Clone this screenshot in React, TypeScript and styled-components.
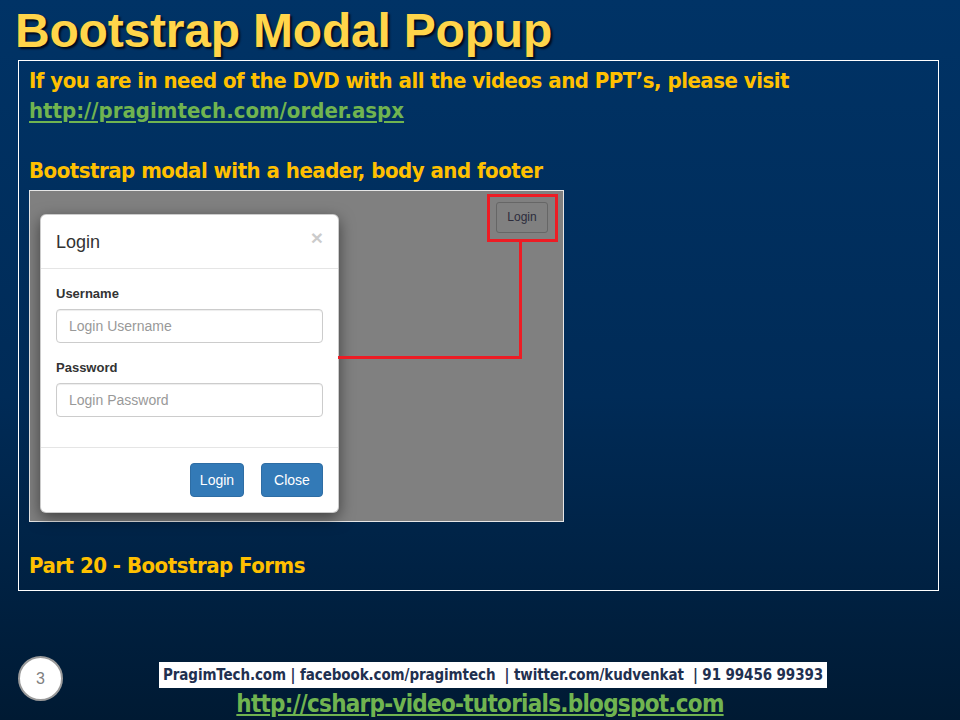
import React from 'react'
import styled, { createGlobalStyle } from 'styled-components'

const GlobalStyle = createGlobalStyle`
  html, body {
    margin: 0;
    padding: 0;
    background: #001a33;
  }
`

const narrow = `'DejaVu Sans Condensed', 'Liberation Sans', sans-serif`
const sans = `'Liberation Sans', Arial, sans-serif`

const Slide = styled.div`
  width: 960px;
  height: 720px;
  overflow: hidden;
  display: flex;
  flex-direction: column;
  background: linear-gradient(180deg, #003366 0%, #002b57 55%, #001a33 100%);
`

const Title = styled.h1`
  margin: 0;
  height: 60px;
  padding-left: 15px;
  font-family: ${sans};
  font-size: 48px;
  font-weight: bold;
  line-height: 62px;
  color: #ffd54a;
  text-shadow: 2px 2px 2px #000a1a;
  letter-spacing: -0.2px;
`

const ContentBox = styled.div`
  margin-left: 18px;
  width: 921px;
  height: 531px;
  border: 1px solid #ffffff;
  box-sizing: border-box;
  padding: 5px 10px 0 10px;
  display: flex;
  flex-direction: column;
`

const Line = styled.div<{ $gap?: number }>`
  font-family: ${narrow};
  font-weight: bold;
  font-size: 22px;
  letter-spacing: -0.5px;
  line-height: 30px;
  height: 30px;
  color: #ffc000;
  margin-top: ${(p) => p.$gap ?? 0}px;
  white-space: nowrap;
`

const Link = styled.a`
  color: #70b450;
  letter-spacing: 0;
  text-decoration: underline;
  text-decoration-thickness: 2px;
  text-underline-offset: 3px;
`

const Shot = styled.div`
  position: relative;
  margin-top: 4px;
  width: 535px;
  height: 332px;
  box-sizing: border-box;
  border: 1px solid #e6e6e6;
  background: #808080;
  display: flex;
  align-items: flex-start;
  justify-content: space-between;
  padding: 23px 15px 0 10px;
`

const Modal = styled.div`
  width: 299px;
  height: 299px;
  box-sizing: border-box;
  background: #ffffff;
  border: 1px solid rgba(0, 0, 0, 0.2);
  border-radius: 6px;
  box-shadow: 0 5px 15px rgba(0, 0, 0, 0.5);
  font-family: ${sans};
  color: #333333;
  display: flex;
  flex-direction: column;
`

const ModalHeader = styled.div`
  height: 55px;
  box-sizing: border-box;
  padding: 15px 15px 0 15px;
  border-bottom: 1px solid #e5e5e5;
  display: flex;
  justify-content: space-between;
  align-items: flex-start;
`

const ModalTitle = styled.div`
  font-size: 18px;
  line-height: 22px;
  margin-top: 1px;
`

const CloseX = styled.span`
  font-size: 21px;
  font-weight: bold;
  line-height: 1;
  color: #000;
  opacity: 0.2;
  margin-top: -3px;
`

const ModalBody = styled.div`
  padding: 15px;
  flex: 1;
`

const Group = styled.div`
  margin-bottom: 15px;
`

const Label = styled.div`
  font-size: 13px;
  font-weight: bold;
  line-height: 20px;
  margin-bottom: 5px;
  color: #333;
`

const Input = styled.div`
  height: 34px;
  box-sizing: border-box;
  border: 1px solid #cccccc;
  border-radius: 4px;
  box-shadow: inset 0 1px 1px rgba(0, 0, 0, 0.075);
  padding: 0 12px;
  font-size: 14px;
  line-height: 32px;
  color: #999999;
`

const ModalFooter = styled.div`
  height: 65px;
  box-sizing: border-box;
  border-top: 1px solid #e5e5e5;
  padding: 15px;
  display: flex;
  justify-content: flex-end;
  gap: 17px;
`

const BlueButton = styled.div<{ $w: number }>`
  width: ${(p) => p.$w}px;
  height: 34px;
  box-sizing: border-box;
  background: #337ab7;
  border: 1px solid #2e6da4;
  border-radius: 4px;
  color: #fff;
  font-size: 14px;
  line-height: 32px;
  text-align: center;
`

const PageButton = styled.div`
  margin-top: -12px;
  width: 52px;
  height: 31px;
  box-sizing: border-box;
  border: 1px solid #666666;
  border-radius: 3px;
  font-family: ${sans};
  font-size: 12px;
  line-height: 29px;
  text-align: center;
  color: #2c2c3c;
`

const RedBox = styled.div`
  position: absolute;
  left: 457px;
  top: 3px;
  width: 71px;
  height: 48px;
  box-sizing: border-box;
  border: 3px solid #ed1c24;
`

const RedLine = styled.div<{ $l: number; $t: number; $w: number; $h: number }>`
  position: absolute;
  left: ${(p) => p.$l}px;
  top: ${(p) => p.$t}px;
  width: ${(p) => p.$w}px;
  height: ${(p) => p.$h}px;
  background: #ed1c24;
`

const Footer = styled.div`
  flex: 1;
  display: flex;
  flex-direction: column;
  align-items: center;
  position: relative;
  padding-top: 71px;
`

const PageNumber = styled.div`
  position: absolute;
  left: 18px;
  top: 65px;
  width: 45px;
  height: 45px;
  border-radius: 50%;
  box-sizing: border-box;
  background: #ffffff;
  border: 2px solid #9a9a9a;
  display: flex;
  align-items: center;
  justify-content: center;
  font-family: ${sans};
  font-size: 16px;
  color: #7f7f7f;
`

const Strip = styled.div`
  background: #ffffff;
  height: 26px;
  padding: 0 4px;
  font-family: ${narrow};
  font-weight: bold;
  font-size: 15px;
  letter-spacing: -0.1px;
  line-height: 26px;
  color: #1f3050;
  white-space: pre;
  margin-left: 26px;
`

const BigLink = styled.a`
  font-family: ${narrow};
  font-weight: bold;
  font-size: 24px;
  letter-spacing: -0.75px;
  line-height: 32px;
  color: #70b450;
  text-decoration: underline;
  text-decoration-thickness: 2px;
  text-underline-offset: 2px;
`

export default function App() {
  return (
    <>
      <GlobalStyle />
      <Slide>
        <Title>Bootstrap Modal Popup</Title>
        <ContentBox>
          <Line>If you are in need of the DVD with all the videos and PPT’s, please visit</Line>
          <Line>
            <Link>http://pragimtech.com/order.aspx</Link>
          </Line>
          <Line $gap={30}>Bootstrap modal with a header, body and footer</Line>
          <Shot>
            <Modal>
              <ModalHeader>
                <ModalTitle>Login</ModalTitle>
                <CloseX>×</CloseX>
              </ModalHeader>
              <ModalBody>
                <Group>
                  <Label>Username</Label>
                  <Input>Login Username</Input>
                </Group>
                <Group>
                  <Label>Password</Label>
                  <Input>Login Password</Input>
                </Group>
              </ModalBody>
              <ModalFooter>
                <BlueButton $w={54}>Login</BlueButton>
                <BlueButton $w={62}>Close</BlueButton>
              </ModalFooter>
            </Modal>
            <PageButton>Login</PageButton>
            <RedBox />
            <RedLine $l={489} $t={51} $w={3} $h={116} />
            <RedLine $l={308} $t={165} $w={184} $h={3} />
          </Shot>
          <Line $gap={29}>Part 20 - Bootstrap Forms</Line>
        </ContentBox>
        <Footer>
          <PageNumber>3</PageNumber>
          <Strip>PragimTech.com | facebook.com/pragimtech  | twitter.com/kudvenkat  | 91 99456 99393</Strip>
          <BigLink>http://csharp-video-tutorials.blogspot.com</BigLink>
        </Footer>
      </Slide>
    </>
  )
}
